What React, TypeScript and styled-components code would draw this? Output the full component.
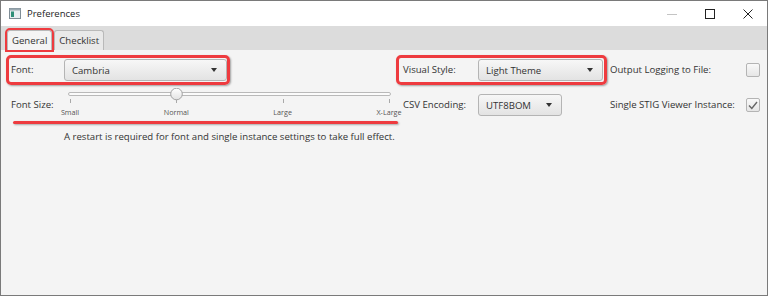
import styled, { createGlobalStyle } from "styled-components";

const GlobalStyle = createGlobalStyle`
  html, body { margin: 0; padding: 0; }
  body {
    font-family: "Open Sans", "Noto Sans", sans-serif;
    color: #333;
  }
  * { box-sizing: border-box; }
`;

const RED = "#ee3b3f";

const Window = styled.div`
  width: 768px;
  height: 296px;
  border: 1px solid #7a7a7a;
  display: flex;
  flex-direction: column;
  background: #f4f4f4;
  overflow: hidden;
`;

const TitleBar = styled.div`
  height: 25px;
  flex: none;
  display: flex;
  align-items: center;
  background: #ffffff;
  padding-left: 8px;
`;

const Title = styled.span`
  margin-left: 6px;
  font-size: 9.5px;
  color: #1e1e1e;
`;

const Spacer = styled.div`
  flex: 1;
`;

const WinButton = styled.div<{ $dim?: boolean }>`
  width: 38px;
  height: 25px;
  display: flex;
  align-items: center;
  justify-content: center;
  color: ${(p) => (p.$dim ? "#c4c4c4" : "#222")};
`;

const TabBar = styled.div`
  height: 24px;
  flex: none;
  display: flex;
  align-items: flex-end;
  gap: 2px;
  padding-left: 6px;
  background: #dcdcdc;
`;

const Tab = styled.div<{ $active?: boolean }>`
  height: 20px;
  display: flex;
  align-items: center;
  padding: 0 4px;
  font-size: 9.6px;
  color: #333;
  border: 1px solid #b9b9b9;
  border-bottom: none;
  border-radius: 3px 3px 0 0;
  background: ${(p) => (p.$active ? "#f4f4f4" : "#e9e9e9")};
  outline: ${(p) => (p.$active ? `2.5px solid ${RED}` : "none")};
  outline-offset: 0;
`;

const Content = styled.div`
  flex: 1;
  display: flex;
  flex-direction: column;
  padding: 5px 5px 0 5px;
`;

const Grid = styled.div`
  display: grid;
  grid-template-columns: 390px 211px 1fr;
  grid-template-rows: 30px auto;
  row-gap: 3px;
`;

const Highlight = styled.div<{ $width: number; $pad: number }>`
  width: ${(p) => p.$width}px;
  height: 30px;
  display: flex;
  align-items: center;
  padding-left: ${(p) => p.$pad}px;
  border: 3px solid ${RED};
  border-radius: 5px;
  box-shadow: 1px 1px 2px rgba(0, 0, 0, 0.35);
`;

const Label = styled.span<{ $width: number }>`
  width: ${(p) => p.$width}px;
  flex: none;
  font-size: 9.6px;
  line-height: 12px;
  white-space: nowrap;
`;

const Combo = styled.div<{ $width: number }>`
  width: ${(p) => p.$width}px;
  height: 22px;
  flex: none;
  display: flex;
  align-items: center;
  justify-content: space-between;
  padding: 0 9px 0 7px;
  font-size: 9.6px;
  border: 1px solid #b4b4b4;
  border-radius: 3px;
  background: linear-gradient(#f7f7f7, #e3e3e3);
`;

const Arrow = styled.span`
  width: 0;
  height: 0;
  border-left: 3.5px solid transparent;
  border-right: 3.5px solid transparent;
  border-top: 4px solid #333;
`;

const Cell = styled.div<{ $pad: number; $top: number }>`
  height: 22px;
  margin-top: ${(p) => p.$top}px;
  display: flex;
  align-items: center;
  padding-left: ${(p) => p.$pad}px;
`;

const CheckBox = styled.div`
  width: 14px;
  height: 14px;
  flex: none;
  display: flex;
  align-items: center;
  justify-content: center;
  border: 1px solid #b4b4b4;
  border-radius: 2px;
  background: linear-gradient(#f9f9f9, #e6e6e6);
`;

const FontSizeGroup = styled.div`
  margin-left: 5px;
  display: flex;
  flex-direction: column;
`;

const SliderRow = styled.div`
  display: flex;
  align-items: flex-start;
`;

const SliderLabel = styled(Label)`
  margin-top: 11px;
`;

const SliderBox = styled.div`
  width: 349px;
  display: flex;
  flex-direction: column;
`;

const TickLabels = styled.div`
  display: flex;
  justify-content: space-between;
  height: 10px;
`;

const TickLabel = styled.span`
  width: 30px;
  text-align: center;
  font-size: 7.2px;
  line-height: 10px;
  color: #555;
  white-space: nowrap;
`;

const RedBar = styled.div`
  width: 385px;
  height: 3px;
  margin: 4px 0 0 2px;
  border-radius: 2px;
  background: ${RED};
  box-shadow: 1px 1px 2px rgba(0, 0, 0, 0.3);
`;

const Note = styled.div`
  margin: 7px 0 0 58px;
  font-size: 9.6px;
  line-height: 12px;
`;

function AppIcon() {
  return (
    <svg width="12" height="11" viewBox="0 0 12 11">
      <rect x="0.5" y="0.5" width="11" height="10" fill="#e9eef1" stroke="#7f8d96" />
      <rect x="0.5" y="0.5" width="11" height="2" fill="#9aa8b0" />
      <rect x="2" y="3.5" width="3" height="5.5" fill="#2f8f78" />
    </svg>
  );
}

function Slider() {
  const ticks = [15, 121, 228, 334];
  return (
    <svg width="349" height="19" viewBox="0 0 349 19">
      <rect x="13.5" y="4.5" width="322" height="3" rx="1.5" fill="#fbfbfb" stroke="#b9b9b9" />
      {ticks.map((x) => (
        <line key={x} x1={x + 0.5} y1="11" x2={x + 0.5} y2="15" stroke="#a9a9a9" />
      ))}
      <defs>
        <linearGradient id="thumb" x1="0" y1="0" x2="0" y2="1">
          <stop offset="0" stopColor="#ffffff" />
          <stop offset="1" stopColor="#e2e2e2" />
        </linearGradient>
      </defs>
      <circle cx="121.5" cy="6" r="5.8" fill="url(#thumb)" stroke="#a3a3a3" />
    </svg>
  );
}

export default function App() {
  return (
    <>
      <GlobalStyle />
      <Window>
        <TitleBar>
          <AppIcon />
          <Title>Preferences</Title>
          <Spacer />
          <WinButton $dim>
            <svg width="10" height="10" viewBox="0 0 10 10">
              <line x1="0" y1="5.5" x2="10" y2="5.5" stroke="currentColor" />
            </svg>
          </WinButton>
          <WinButton>
            <svg width="10" height="10" viewBox="0 0 10 10">
              <rect x="0.5" y="0.5" width="9" height="9" fill="none" stroke="currentColor" />
            </svg>
          </WinButton>
          <WinButton>
            <svg width="10" height="10" viewBox="0 0 10 10">
              <path d="M0.5 0.5 L9.5 9.5 M9.5 0.5 L0.5 9.5" stroke="currentColor" />
            </svg>
          </WinButton>
        </TitleBar>
        <TabBar>
          <Tab $active>General</Tab>
          <Tab>Checklist</Tab>
        </TabBar>
        <Content>
          <Grid>
            <Highlight $width={224} $pad={2}>
              <Label $width={53}>Font:</Label>
              <Combo $width={163}>
                Cambria
                <Arrow />
              </Combo>
            </Highlight>
            <Highlight $width={211} $pad={4}>
              <Label $width={75}>Visual Style:</Label>
              <Combo $width={125}>
                Light Theme
                <Arrow />
              </Combo>
            </Highlight>
            <Cell $pad={3} $top={4}>
              <Label $width={136}>Output Logging to File:</Label>
              <CheckBox />
            </Cell>

            <FontSizeGroup>
              <SliderRow>
                <SliderLabel $width={44}>Font Size:</SliderLabel>
                <SliderBox>
                  <Slider />
                  <TickLabels>
                    <TickLabel>Small</TickLabel>
                    <TickLabel>Normal</TickLabel>
                    <TickLabel>Large</TickLabel>
                    <TickLabel>X-Large</TickLabel>
                  </TickLabels>
                </SliderBox>
              </SliderRow>
              <RedBar />
            </FontSizeGroup>
            <Cell $pad={7} $top={6}>
              <Label $width={75}>CSV Encoding:</Label>
              <Combo $width={84}>
                UTF8BOM
                <Arrow />
              </Combo>
            </Cell>
            <Cell $pad={3} $top={6}>
              <Label $width={136}>Single STIG Viewer Instance:</Label>
              <CheckBox>
                <svg width="10" height="9" viewBox="0 0 10 9">
                  <path d="M1 4.5 L3.8 7.5 L9 1" fill="none" stroke="#666" strokeWidth="1.4" />
                </svg>
              </CheckBox>
            </Cell>
          </Grid>
          <Note>A restart is required for font and single instance settings to take full effect.</Note>
        </Content>
      </Window>
    </>
  );
}
